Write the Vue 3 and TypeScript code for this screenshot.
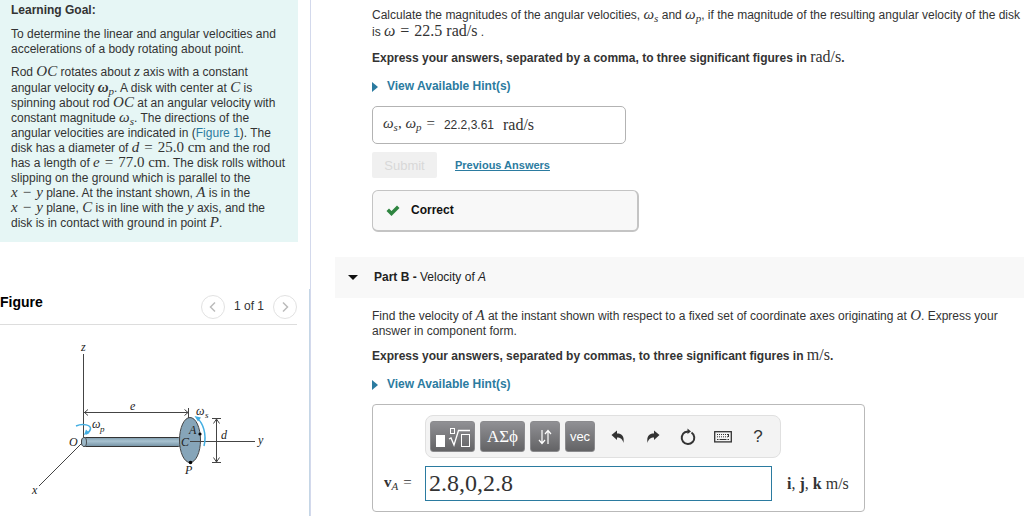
<script setup lang="ts">
import { ref } from 'vue'

const answerB = ref('2.8,0,2.8')
</script>

<template>
  <div class="page">
    <aside class="side">
      <section class="goal">
        <h2>Learning Goal:</h2>
        <p>
          <span class="line">To determine the linear and angular velocities and</span>
          <span class="line">accelerations of a body rotating about point.</span>
        </p>
        <p>
          <span class="line">Rod <i class="m">OC</i> rotates about <i class="m">z</i> axis with a constant</span>
          <span class="line tall">angular velocity <b class="m"><i>ω</i></b><sub class="m"><i>p</i></sub>. A disk with center at <i class="m">C</i> is</span>
          <span class="line">spinning about rod <i class="m">OC</i> at an angular velocity with</span>
          <span class="line">constant magnitude <i class="m">ω</i><sub class="m"><i>s</i></sub>. The directions of the</span>
          <span class="line">angular velocities are indicated in (<a href="#figure">Figure 1</a>). The</span>
          <span class="line">disk has a diameter of <span class="m"><i>d</i><span class="rel">=</span>25.0 cm</span> and the rod</span>
          <span class="line">has a length of <span class="m"><i>e</i><span class="rel">=</span>77.0 cm</span>. The disk rolls without</span>
          <span class="line">slipping on the ground which is parallel to the</span>
          <span class="line"><span class="m"><i>x</i><span class="rel">−</span><i>y</i></span> plane. At the instant shown, <i class="m">A</i> is in the</span>
          <span class="line"><span class="m"><i>x</i><span class="rel">−</span><i>y</i></span> plane, <i class="m">C</i> is in line with the <i class="m">y</i> axis, and the</span>
          <span class="line">disk is in contact with ground in point <i class="m">P</i>.</span>
        </p>
      </section>

      <section id="figure" class="figure">
        <header class="figure-head">
          <h2>Figure</h2>
          <nav class="pager">
            <button type="button" aria-label="Previous figure">
              <svg width="10" height="12" viewBox="0 0 10 12"><path d="M7 1.5 2.5 6 7 10.5" /></svg>
            </button>
            <span>1 of 1</span>
            <button type="button" aria-label="Next figure">
              <svg width="10" height="12" viewBox="0 0 10 12"><path d="M3 1.5 7.5 6 3 10.5" /></svg>
            </button>
          </nav>
        </header>
        <svg class="diagram" width="290" height="180" viewBox="0 335 290 180" role="img" aria-label="Disk on a rod">
          <defs>
            <linearGradient id="rod" x1="0" y1="0" x2="0" y2="1">
              <stop offset="0" stop-color="#7d9aac" />
              <stop offset="0.4" stop-color="#a9c3d1" />
              <stop offset="1" stop-color="#7391a4" />
            </linearGradient>
          </defs>
          <g class="axis">
            <path d="M83.5 354V437M82 443 39 486" />
            <path d="M84 412.5H188M88 409.5 84.5 412.5 88 415.5M184.500 409.500 188 412.500 184.500 415.500M188.500 408V418" />
          </g>
          <rect x="81.500" y="437.500" width="101" height="9" rx="4" fill="url(#rod)" stroke="#333" />
          <ellipse cx="84" cy="442" rx="2.500" ry="4.500" fill="#9bb7c7" stroke="#333" stroke-width="0.800" />
          <ellipse cx="190" cy="440" rx="10.500" ry="22.500" fill="#86a5b9" stroke="#444" />
          <path class="axis" d="M190 441.500H255" />
          <g class="axis">
            <path d="M216.500 419V462M212 418.500H221M212 462.500H221M213.500 423.500 216.500 419 219.500 423.500M213.500 457.500 216.500 462 219.500 457.500" />
          </g>
          <circle cx="200" cy="434" r="1.600" />
          <circle cx="190.500" cy="462.500" r="1.800" />
          <g class="spin">
            <path d="M76 426C83 423 91 425 90.500 429 90 431 88 433 86 434" />
            <path d="M204 446C207 434 203 423 197 418" />
          </g>
          <path fill="#43aee2" d="M84 435 86 429.500 89.500 433zM194.500 416 201 417.500 198 421.500z" />
          <g class="labels">
            <text x="81" y="351">z</text>
            <text x="130" y="410">e</text>
            <text x="92" y="428">ω</text><text class="small" x="100" y="432">p</text>
            <text x="196" y="415">ω</text><text class="small" x="205" y="418">s</text>
            <text x="69" y="446">O</text>
            <text x="181" y="446">C</text>
            <text x="189" y="434">A</text>
            <text x="221" y="439">d</text>
            <text x="258" y="444">y</text>
            <text x="185" y="474">P</text>
            <text x="32" y="494">x</text>
          </g>
        </svg>
      </section>
    </aside>

    <main class="content">
      <section class="part part-a">
        <p class="prompt">
          <span class="line">Calculate the magnitudes of the angular velocities, <i class="m">ω</i><sub class="m"><i>s</i></sub> and <i class="m">ω</i><sub class="m"><i>p</i></sub>, if the magnitude of the resulting angular velocity of the disk</span>
          <span class="line second">is <span class="m wide-math"><i>ω</i><span class="rel">=</span>22.5 rad/s</span> .</span>
        </p>
        <p class="express">Express your answers, separated by a comma, to three significant figures in <span class="m wide-math">rad/s</span>.</p>
        <button type="button" class="hint"><span class="tri"></span>View Available Hint(s)</button>
        <div class="given">
          <span class="m"><i>ω</i><sub><i>s</i></sub>, <i>ω</i><sub><i>p</i></sub><span class="rel">=</span></span>
          <span class="value">22.2,3.61</span>
          <span class="m wide-math">rad/s</span>
        </div>
        <div class="actions">
          <button type="button" class="submit" disabled>Submit</button>
          <a href="#previous">Previous Answers</a>
        </div>
        <div class="correct">
          <svg width="14" height="12" viewBox="0 0 14 12"><path d="M0.500 6 3 3.500 5.500 6 11 0.500 13.500 3 5.500 11z" fill="#2f8540" /></svg>
          <strong>Correct</strong>
        </div>
      </section>

      <header class="part-head">
        <button type="button" class="fold" aria-label="Collapse Part B"></button>
        <h2>Part B - <span>Velocity of <i>A</i></span></h2>
      </header>

      <section class="part part-b">
        <p class="prompt">
          <span class="line">Find the velocity of <i class="m">A</i> at the instant shown with respect to a fixed set of coordinate axes originating at <i class="m">O</i>. Express your</span>
          <span class="line">answer in component form.</span>
        </p>
        <p class="express">Express your answers, separated by commas, to three significant figures in <span class="m wide-math">m/s</span>.</p>
        <button type="button" class="hint"><span class="tri"></span>View Available Hint(s)</button>
        <div class="editor">
          <div class="toolbar">
            <button type="button" class="key wide" aria-label="Templates">
              <svg width="36" height="22" viewBox="0 0 36 22" fill="none" stroke="#fff">
                <rect x="1" y="9" width="9" height="12" fill="#fff" stroke="none" />
                <rect x="15.500" y="2.500" width="4" height="5" />
                <path d="M14 13 16 12 19 19 23.500 4.500H35" stroke-width="1.300" />
                <rect x="26.500" y="8.500" width="8" height="12" />
              </svg>
            </button>
            <button type="button" class="key wide greek">ΑΣϕ</button>
            <button type="button" class="key" aria-label="Subscript and superscript">
              <svg width="14" height="16" viewBox="0 0 14 16" fill="none" stroke="#fff" stroke-width="1.200"><path d="M4 1V14M1 11 4 14.500 7 11M10 15V2M7 5 10 1.500 13 5" /></svg>
            </button>
            <button type="button" class="key">vec</button>
            <div class="tools">
              <button type="button" class="tool" aria-label="Undo">
                <svg width="14" height="14" viewBox="0 0 14 14"><path d="M0.500 5 6 0.500V3.500C11 3.500 13.500 6 12.500 13 11.500 9 9.500 7.500 6 7.500V10z" fill="#333" /></svg>
              </button>
              <button type="button" class="tool" aria-label="Redo">
                <svg width="14" height="14" viewBox="0 0 14 14"><path d="M13.500 5 8 0.500V3.500C3 3.500 0.500 6 1.500 13 2.500 9 4.500 7.500 8 7.500V10z" fill="#333" /></svg>
              </button>
              <button type="button" class="tool" aria-label="Reset">
                <svg width="16" height="18" viewBox="0 0 16 18"><path d="M11.500 4.500A6.300 6.300 0 1 1 5 4.200L8 3.500" fill="none" stroke="#333" stroke-width="2" /><path d="M7.500 0.500 11 3.500 7.500 6z" fill="#333" /></svg>
              </button>
              <button type="button" class="tool" aria-label="Keyboard shortcuts">
                <svg width="18" height="12" viewBox="0 0 18 12" fill="none" stroke="#333"><rect x="0.700" y="0.700" width="16.600" height="10.200" stroke-width="1.300" /><path d="M3 3.500H15M3 5.800H15" stroke-dasharray="1 1" /><path d="M3 8.500H4.500M5.500 8.500H12.500M13.500 8.500H15M14.500 3V6" /></svg>
              </button>
              <button type="button" class="tool help">?</button>
            </div>
          </div>
          <label class="m" for="answer-b"><b>v</b><sub><i>A</i></sub><span class="rel">=</span></label>
          <input id="answer-b" v-model="answerB" type="text" />
          <span class="m wide-math units"><b>i</b>, <b>j</b>, <b>k</b> m/s</span>
        </div>
      </section>
    </main>
  </div>
</template>

<style>
body {
  margin: 0;
  background: #fff;
}
</style>

<style scoped>
.page {
  display: grid;
  grid-template-columns: 311px minmax(0, 1fr);
  min-height: 100vh;
  overflow: hidden;
  box-sizing: border-box;
  font-family: "Liberation Sans", Arial, sans-serif;
  font-size: 12px;
  line-height: 15px;
  color: #333;
}
h2,
p {
  margin: 0;
}
button {
  font: inherit;
  padding: 0;
  border: 0;
  background: none;
}
a {
  color: #2b7ba0;
}
.line {
  display: block;
  white-space: nowrap;
}
.m {
  font-family: "Liberation Serif", "Times New Roman", serif;
  font-size: 15px;
  font-weight: 400;
  line-height: 0;
}
.wide-math {
  font-size: 16px;
}
b.m,
.m b {
  font-weight: 700;
}
sub,
sub.m {
  font-size: 11px;
  line-height: 0;
  vertical-align: -3px;
}
.rel {
  margin: 0 5px;
}
.side {
  display: flex;
  flex-direction: column;
  border-right: 1px solid #d3d9ec;
}
.goal {
  margin-right: 12px;
  padding: 3px 0 11px 11px;
  background: #e6f6f5;
}
.goal h2 {
  font-size: 12px;
}
.goal p {
  margin-top: 9px;
}
.goal p + p {
  margin-top: 8px;
}
.goal .tall {
  line-height: 16px;
}
.goal a {
  text-decoration: none;
}
.figure {
  flex: 1;
  margin-top: 47px;
  padding-right: 12px;
  border-right: 1px solid #c5d6e6;
}
.figure-head {
  display: flex;
  justify-content: space-between;
  align-items: center;
  height: 35px;
  border-bottom: 1px solid #ddd;
}
.figure-head h2 {
  font-size: 14px;
  color: #000;
  padding-bottom: 8px;
}
.pager {
  display: flex;
  align-items: center;
  gap: 9px;
}
.pager button {
  display: grid;
  place-items: center;
  width: 24px;
  height: 24px;
  border: 1px solid #e2e2e2;
  border-radius: 50%;
}
.pager path {
  fill: none;
  stroke: #bbb;
  stroke-width: 1.5;
}
.diagram {
  display: block;
  margin-top: 10px;
}
.axis {
  fill: none;
  stroke: #444;
}
.spin {
  fill: none;
  stroke: #43aee2;
  stroke-width: 1.5;
}
.labels {
  font: italic 12px "Liberation Serif", serif;
  fill: #222;
}
.labels .small {
  font-size: 9px;
}
.part {
  padding: 0 0 0 61px;
}
.part-a {
  padding-top: 8px;
}
.second {
  margin-top: 2px;
}
.express {
  margin-top: 11px;
  font-weight: 700;
  white-space: nowrap;
}
.part-b .express {
  margin-top: 10px;
}
.hint {
  display: flex;
  align-items: center;
  margin-top: 13px;
  font-weight: 700;
  color: #2b7ba0;
}
.tri {
  margin-right: 9px;
  border-left: 6px solid #2b7ba0;
  border-top: 5px solid transparent;
  border-bottom: 5px solid transparent;
}
.given {
  box-sizing: border-box;
  display: flex;
  align-items: center;
  width: 254px;
  height: 38px;
  margin-top: 12px;
  padding: 0 10px;
  border: 1px solid #b3b3b3;
  border-radius: 5px;
}
.value {
  margin: 0 9px 0 4px;
}
.actions {
  display: flex;
  align-items: center;
  gap: 18px;
  margin-top: 8px;
}
.submit {
  width: 65px;
  height: 26px;
  background: #f0f0f0;
  border-radius: 2px;
  font-size: 13px;
  color: #d8d8d8;
}
.actions a {
  font-size: 11px;
  font-weight: 700;
}
.correct {
  box-sizing: border-box;
  display: flex;
  align-items: center;
  gap: 11px;
  width: 267px;
  height: 42px;
  margin-top: 12px;
  padding-left: 13px;
  border: 1px solid #c4c4c4;
  border-right-width: 2px;
  border-bottom-width: 2px;
  border-radius: 6px;
  background: #f8f8f8;
  color: #111;
}
.part-head {
  display: flex;
  align-items: center;
  height: 41px;
  margin: 25px 0 11px 24px;
  padding-left: 13px;
  background: #f8f8f8;
  color: #222;
}
.part-head h2 {
  margin-left: 16px;
  font-size: 12px;
}
.part-head h2 span {
  font-weight: 400;
}
.fold {
  border: 5px solid transparent;
  border-top: 5px solid #111;
  border-bottom: 0;
}
.editor {
  box-sizing: border-box;
  display: grid;
  grid-template-columns: 41px minmax(0, 1fr) 82px;
  align-content: start;
  align-items: center;
  row-gap: 8px;
  max-width: 493px;
  height: 108px;
  margin-top: 12px;
  padding: 10px 10px 10px 11px;
  border: 1px solid #b9b9b9;
  border-radius: 4px;
}
.toolbar {
  grid-column: 2 / -1;
  box-sizing: border-box;
  display: flex;
  align-items: center;
  gap: 5px;
  width: 356px;
  height: 43px;
  padding-left: 4px;
  border: 1px solid #e0e0e0;
  border-radius: 8px;
  background: #f3f3f3;
}
.key {
  display: grid;
  place-items: center;
  width: 30px;
  height: 31px;
  border: 1px solid #8b8b8e;
  border-radius: 3px;
  background: linear-gradient(#909094, #636365);
  color: #fff;
  font-size: 13px;
}
.wide {
  width: 45px;
}
.greek {
  font-family: "Liberation Serif", serif;
  font-size: 17px;
}
.tools {
  display: flex;
  gap: 5px;
  margin-left: 3px;
}
.tool {
  display: grid;
  place-items: center;
  width: 30px;
  height: 30px;
}
.help {
  font-size: 17px;
  color: #333;
}
.editor input {
  box-sizing: border-box;
  width: 100%;
  height: 35px;
  padding: 0 3px;
  border: 1px solid #2b7ba0;
  border-radius: 0;
  outline: 0;
  color: #333;
  font: 24px "Liberation Serif", "Times New Roman", serif;
}
.units {
  margin-left: 15px;
  white-space: nowrap;
}
</style>
